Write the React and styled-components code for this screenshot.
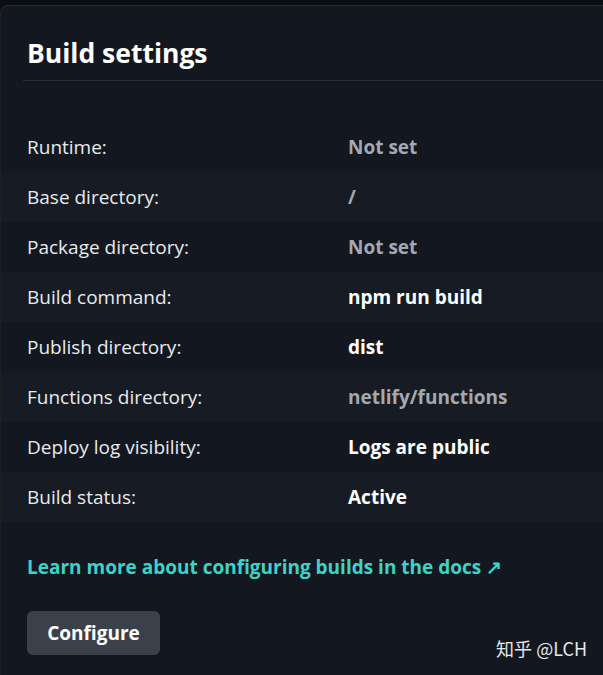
import styled, { createGlobalStyle } from 'styled-components';

const GlobalStyle = createGlobalStyle`
	html, body {
		margin: 0;
		padding: 0;
		background: #0b0e12;
	}
	body {
		font-family: 'Open Sans', 'Noto Sans', sans-serif;
		overflow: hidden;
	}
`;

const settings = [
	{ label: 'Runtime:', value: 'Not set', muted: true },
	{ label: 'Base directory:', value: '/', muted: true },
	{ label: 'Package directory:', value: 'Not set', muted: true },
	{ label: 'Build command:', value: 'npm run build' },
	{ label: 'Publish directory:', value: 'dist' },
	{ label: 'Functions directory:', value: 'netlify/functions', muted: true },
	{ label: 'Deploy log visibility:', value: 'Logs are public' },
	{ label: 'Build status:', value: 'Active' },
];

const Page = styled.div`
	width: 603px;
	height: 675px;
	padding-top: 5px;
	box-sizing: border-box;
	overflow: hidden;
	position: relative;
`;

const Card = styled.section`
	width: 640px;
	height: 700px;
	box-sizing: border-box;
	background: #131820;
	border-top: 1px solid #262b33;
	border-left: 1px solid #1c2129;
	border-radius: 8px 0 0 0;
	padding: 30px 0 0 26px;
`;

const Title = styled.h2`
	margin: 0 0 0 -4px;
	padding: 0 0 10px 4px;
	border-bottom: 1px solid #2b3139;
	font-size: 26.5px;
	font-weight: 700;
	color: #ffffff;
	line-height: 34px;
`;

const List = styled.dl`
	margin: 41px 0 0 -26px;
	padding: 0;
`;

const Row = styled.div`
	display: grid;
	grid-template-columns: 321px 1fr;
	align-items: center;
	height: 50px;
	padding-left: 26px;
	box-sizing: border-box;
	background: ${({ $striped }) => ($striped ? '#171c24' : 'transparent')};
	font-size: 19px;
`;

const Label = styled.dt`
	margin: 0;
	color: #e8eaed;
	font-weight: 400;
`;

const Value = styled.dd`
	margin: 0;
	font-weight: 700;
	color: ${({ $muted }) => ($muted ? '#a3a9b2' : '#ffffff')};
`;

const DocsLink = styled.a`
	display: inline-block;
	margin-top: 33px;
	font-size: 19px;
	font-weight: 700;
	color: #3dd3c8;
	text-decoration: none;
	line-height: 24px;
`;

const ConfigureButton = styled.button`
	display: block;
	margin-top: 32px;
	width: 133px;
	height: 44px;
	border: none;
	border-radius: 6px;
	background: #3b414a;
	color: #ffffff;
	font-family: inherit;
	font-size: 19px;
	font-weight: 700;
`;

const Watermark = styled.span`
	position: absolute;
	right: 16px;
	bottom: 14px;
	font-family: 'Noto Sans CJK SC', 'Noto Sans', sans-serif;
	font-size: 18px;
	color: #e6e8eb;
`;

export default function App() {
	return (
		<Page>
			<GlobalStyle />
			<Card>
				<Title>Build settings</Title>
				<List>
					{settings.map(({ label, value, muted }, i) => (
						<Row key={label} $striped={i % 2 === 1}>
							<Label>{label}</Label>
							<Value $muted={muted}>{value}</Value>
						</Row>
					))}
				</List>
				<DocsLink href="#">Learn more about configuring builds in the docs ↗</DocsLink>
				<ConfigureButton>Configure</ConfigureButton>
			</Card>
			<Watermark>知乎 @LCH</Watermark>
		</Page>
	);
}
